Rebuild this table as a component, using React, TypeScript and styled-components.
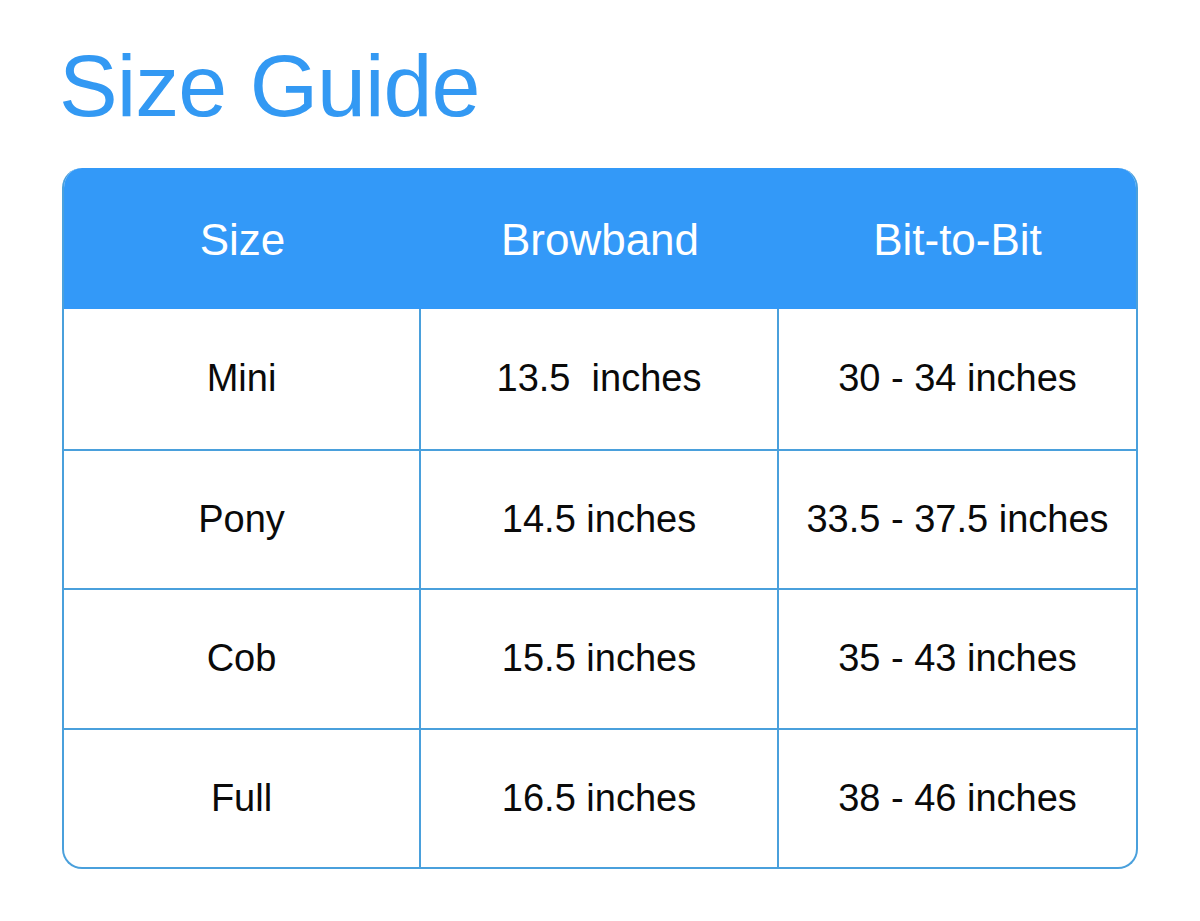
import styled, { createGlobalStyle } from "styled-components";

const GlobalStyle = createGlobalStyle`
  html, body {
    margin: 0;
    padding: 0;
    background: #ffffff;
    font-family: "Liberation Sans", Arial, sans-serif;
  }
`;

const rows = [
  { size: "Mini", browband: "13.5  inches", bit: "30 - 34 inches" },
  { size: "Pony", browband: "14.5 inches", bit: "33.5 - 37.5 inches" },
  { size: "Cob", browband: "15.5 inches", bit: "35 - 43 inches" },
  { size: "Full", browband: "16.5 inches", bit: "38 - 46 inches" },
];

function App() {
  return (
    <>
      <GlobalStyle />
      <Page>
        <Title>Size Guide</Title>
        <Table>
          <HeadCell>Size</HeadCell>
          <HeadCell>Browband</HeadCell>
          <HeadCell>Bit-to-Bit</HeadCell>
          {rows.map((r) => [
            <Cell key={r.size + "a"}>{r.size}</Cell>,
            <Cell key={r.size + "b"}>{r.browband}</Cell>,
            <Cell key={r.size + "c"} $last>
              {r.bit}
            </Cell>,
          ])}
        </Table>
      </Page>
    </>
  );
}

const Page = styled.div`
  width: 1200px;
  height: 921px;
  padding: 36px 62px 0 62px;
  box-sizing: border-box;
`;

const Title = styled.h1`
  margin: 0 0 0 -3px;
  font-size: 88px;
  font-weight: 400;
  line-height: 100px;
  letter-spacing: -1px;
  color: #3399f3;
  height: 132px;
`;

const Table = styled.div`
  width: 1076px;
  height: 701px;
  box-sizing: border-box;
  border: 2px solid #4aa0dc;
  border-top: none;
  border-radius: 20px;
  overflow: hidden;
  display: grid;
  grid-template-columns: 357px 358px 1fr;
  grid-template-rows: 141px repeat(4, 1fr);
`;

const HeadCell = styled.div`
  background: #3399f8;
  color: #ffffff;
  font-size: 44px;
  display: flex;
  align-items: center;
  justify-content: center;
  margin: 0 -2px;
  padding-top: 2px;
`;

const Cell = styled.div<{ $last?: boolean }>`
  display: flex;
  align-items: center;
  justify-content: center;
  font-size: 38px;
  color: #0a0a0a;
  white-space: pre;
  border-top: 2px solid #4aa0dc;
  border-right: ${(p) => (p.$last ? "none" : "2px solid #4aa0dc")};
  &:nth-child(4), &:nth-child(5), &:nth-child(6) {
    border-top: none;
  }
`;

export default App;
